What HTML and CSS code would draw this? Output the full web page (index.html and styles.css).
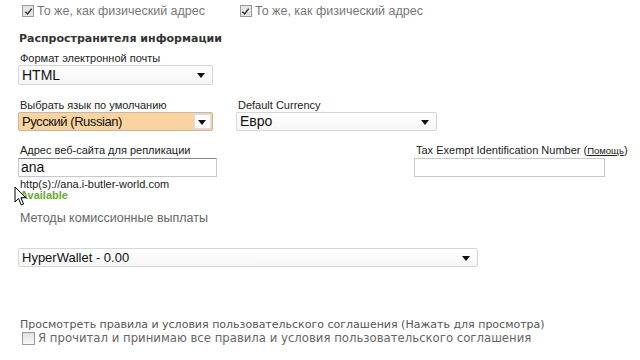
FILE: index.html
```html
<!DOCTYPE html>
<html>
<head>
<meta charset="utf-8">
<link rel="stylesheet" href="styles.css">
</head>
<body>
<div class="page">
  <div class="row same">
    <label class="chk"><span class="box checked"><svg viewBox="0 0 10 10" width="9" height="9"><path d="M1.5 5.2 L4 7.8 L8.6 1.8" fill="none" stroke="#333" stroke-width="1.6"/></svg></span>То же, как физический адрес</label>
    <label class="chk second"><span class="box checked"><svg viewBox="0 0 10 10" width="9" height="9"><path d="M1.5 5.2 L4 7.8 L8.6 1.8" fill="none" stroke="#333" stroke-width="1.6"/></svg></span>То же, как физический адрес</label>
  </div>

  <h2 class="heading">Распространителя информации</h2>

  <div class="field">
    <div class="lbl">Формат электронной почты</div>
    <div class="select w195"><span>HTML</span><i class="arrow"></i></div>
  </div>

  <div class="row pair1">
    <div class="field">
      <div class="lbl">Выбрать язык по умолчанию</div>
      <div class="select w195 hl"><span>Русский (Russian)</span><b class="abox"><i class="arrow"></i></b></div>
    </div>
    <div class="field cur">
      <div class="lbl">Default Currency</div>
      <div class="select w201"><span>Евро</span><i class="arrow"></i></div>
    </div>
  </div>

  <div class="row pair2">
    <div class="field">
      <div class="lbl">Адрес веб-сайта для репликации</div>
      <div class="input w199">ana</div>
      <div class="url">http(s)://ana.i-butler-world.com</div>
      <div class="avail">Available</div>
      <svg class="cursor" width="14" height="21" viewBox="0 0 14 21"><path d="M1 1 L1 16 L4.5 12.5 L7.3 19 L9.6 18 L6.9 11.7 L11.8 11.7 Z" fill="#fff" stroke="#000" stroke-width="1"/></svg>
    </div>
    <div class="field tax">
      <div class="lbl">Tax Exempt Identification Number (<a href="#">Помощь</a>)</div>
      <div class="input w191"></div>
    </div>
  </div>

  <div class="methods">Методы комиссионные выплаты</div>

  <div class="select w460 hw"><span>HyperWallet - 0.00</span><i class="arrow"></i></div>

  <div class="terms">Просмотреть правила и условия пользовательского соглашения (Нажать для просмотра)</div>
  <label class="chk agree"><span class="box"></span>Я прочитал и принимаю все правила и условия пользовательского соглашения</label>
</div>
</body>
</html>
```

FILE: styles.css
```css
html, body {
  margin: 0;
  padding: 0;
  background: #fff;
}
.page {
  position: relative;
  width: 640px;
  height: 360px;
  padding-left: 18px;
  box-sizing: border-box;
  font-family: "Liberation Sans", Arial, sans-serif;
  color: #222;
  overflow: hidden;
}
.row {
  display: flex;
}
.same {
  padding-top: 2px;
  padding-left: 4px;
  height: 18px;
}
.chk {
  display: flex;
  align-items: center;
  font-size: 12.5px;
  color: #777;
  white-space: nowrap;
}
.chk.second {
  margin-left: 35px;
}
.box {
  display: inline-flex;
  align-items: center;
  justify-content: center;
  width: 10px;
  height: 10px;
  border: 1px solid #9a9a9a;
  background: linear-gradient(#e8e8e8, #fafafa);
  margin-right: 3px;
  box-sizing: content-box;
}
.box.checked {
  background: #e4e4e4;
}
.heading {
  margin: 11px 0 0 1px;
  font-family: "DejaVu Sans", Verdana, sans-serif;
  font-weight: bold;
  font-size: 11px;
  color: #333;
  height: 16px;
  line-height: 16px;
}
.field {
  display: flex;
  flex-direction: column;
  position: relative;
}
.lbl {
  font-size: 11px;
  color: #222;
  padding-left: 2px;
  height: 13px;
  line-height: 13px;
  white-space: nowrap;
}
.lbl a {
  color: #222;
  font-size: 9.5px;
}
.heading + .field {
  margin-top: 5px;
}
.select {
  position: relative;
  height: 20px;
  border: 1px solid #d6d6d6;
  border-radius: 2px;
  background: linear-gradient(#fff, #f6f6f6);
  box-sizing: border-box;
  font-size: 14px;
  line-height: 18px;
  padding-left: 3px;
  color: #111;
}
.w195 { width: 195px; }
.w201 { width: 201px; }
.w460 { width: 460px; }
.arrow {
  position: absolute;
  right: 7px;
  top: 7px;
  width: 0;
  height: 0;
  border-left: 4px solid transparent;
  border-right: 4px solid transparent;
  border-top: 5px solid #111;
}
.select.hl {
  height: 19px;
  line-height: 17px;
  background: #f9d3a0;
  border-color: #c8b8a0;
  font-size: 13px;
  letter-spacing: -0.45px;
}
.abox {
  position: absolute;
  right: 1px;
  top: 1px;
  width: 17px;
  height: 15px;
  background: #fff;
  border: 1px solid #ddd;
  box-sizing: border-box;
}
.abox .arrow {
  right: 4px;
  top: 5px;
}
.pair1 {
  margin-top: 14px;
}
.cur {
  margin-left: 23px;
}
.w201 {
  height: 19px;
  line-height: 17px;
}
.pair2 {
  margin-top: 13px;
}
.input {
  height: 19px;
  margin-top: 1px;
  border: 1px solid #c8c8c8;
  border-top-color: #888;
  box-sizing: border-box;
  font-size: 14px;
  line-height: 17px;
  padding-left: 2px;
  color: #111;
}
.w199 { width: 199px; }
.w191 { width: 191px; border-top-color: #c8c8c8; }
.tax {
  margin-left: 197px;
}
.url {
  font-size: 11px;
  color: #222;
  padding-left: 2px;
  margin-top: 2px;
  height: 11px;
  line-height: 11px;
}
.avail {
  font-size: 11px;
  font-weight: bold;
  color: #6aa832;
  padding-left: 2px;
  height: 11px;
  line-height: 11px;
}
.cursor {
  position: absolute;
  left: -4px;
  bottom: -6px;
}
.methods {
  margin-top: 9px;
  padding-left: 2px;
  font-size: 12.5px;
  color: #666;
  height: 16px;
  line-height: 16px;
}
.hw {
  margin-top: 22px;
  height: 19px;
  line-height: 17px;
  font-size: 13px;
}
.terms {
  margin-top: 51px;
  padding-left: 2px;
  font-family: "DejaVu Sans", Verdana, sans-serif;
  font-size: 11px;
  color: #555;
  height: 14px;
  line-height: 14px;
  white-space: nowrap;
}
.agree {
  padding-left: 4px;
  margin-top: -1px;
  font-family: "DejaVu Sans", Verdana, sans-serif;
  font-size: 11.7px;
  color: #666;
}
.agree .box {
  width: 11px;
  height: 11px;
  background: linear-gradient(#e0e0e0, #f8f8f8);
}
```
